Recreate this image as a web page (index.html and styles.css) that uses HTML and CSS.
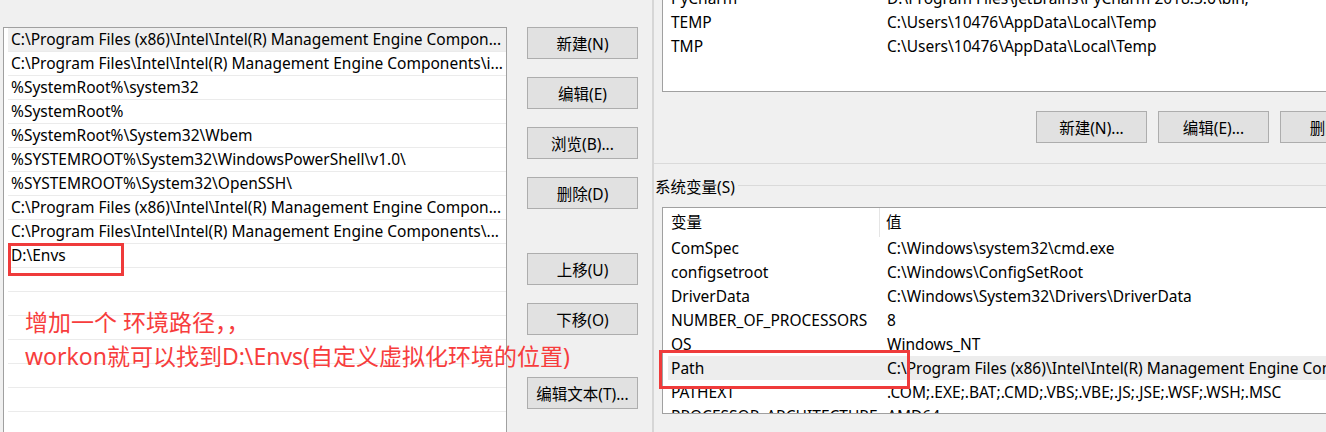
FILE: index.html
```html
<!DOCTYPE html>
<html lang="zh-CN">
<head>
    <meta charset="UTF-8">
    <title>编辑环境变量</title>
    <link rel="stylesheet" href="styles.css">
</head>
<body>
    <div class="screen">
        <!-- 编辑环境变量 对话框 -->
        <div class="edit-pane">
            <ul class="path-list">
                <li class="path-row selected">C:\Program Files (x86)\Intel\Intel(R) Management Engine Compon...</li>
                <li class="path-row">C:\Program Files\Intel\Intel(R) Management Engine Components\i...</li>
                <li class="path-row">%SystemRoot%\system32</li>
                <li class="path-row">%SystemRoot%</li>
                <li class="path-row">%SystemRoot%\System32\Wbem</li>
                <li class="path-row">%SYSTEMROOT%\System32\WindowsPowerShell\v1.0\</li>
                <li class="path-row">%SYSTEMROOT%\System32\OpenSSH\</li>
                <li class="path-row">C:\Program Files (x86)\Intel\Intel(R) Management Engine Compon...</li>
                <li class="path-row">C:\Program Files\Intel\Intel(R) Management Engine Components\...</li>
                <li class="path-row">D:\Envs</li>
                <li class="path-row"></li>
                <li class="path-row"></li>
                <li class="path-row"></li>
                <li class="path-row"></li>
                <li class="path-row"></li>
                <li class="path-row"></li>
                <li class="path-row"></li>
            </ul>
            <div class="btn-col">
                <button class="btn">新建(N)</button>
                <button class="btn">编辑(E)</button>
                <button class="btn">浏览(B)...</button>
                <button class="btn">删除(D)</button>
                <button class="btn move-up">上移(U)</button>
                <button class="btn">下移(O)</button>
                <button class="btn edit-text">编辑文本(T)...</button>
            </div>
        </div>

        <!-- 环境变量 窗口 -->
        <div class="env-pane">
            <div class="var-list user-vars">
                <div class="var-row"><span>PyCharm</span><span>D:\Program Files\JetBrains\PyCharm 2018.3.6\bin;</span></div>
                <div class="var-row"><span>TEMP</span><span>C:\Users\10476\AppData\Local\Temp</span></div>
                <div class="var-row"><span>TMP</span><span>C:\Users\10476\AppData\Local\Temp</span></div>
            </div>
            <div class="btn-row">
                <button class="btn">新建(N)...</button>
                <button class="btn">编辑(E)...</button>
                <button class="btn">删除(D)</button>
            </div>
            <div class="group-sep"></div>
            <div class="group-title">
                <span>系统变量(S)</span>
                <i class="group-line"></i>
            </div>
            <div class="var-list sys-vars">
                <div class="var-head"><span>变量</span><span>值</span></div>
                <div class="var-row"><span>ComSpec</span><span>C:\Windows\system32\cmd.exe</span></div>
                <div class="var-row"><span>configsetroot</span><span>C:\Windows\ConfigSetRoot</span></div>
                <div class="var-row"><span>DriverData</span><span>C:\Windows\System32\Drivers\DriverData</span></div>
                <div class="var-row"><span>NUMBER_OF_PROCESSORS</span><span>8</span></div>
                <div class="var-row"><span>OS</span><span>Windows_NT</span></div>
                <div class="var-row selected"><span>Path</span><span>C:\Program Files (x86)\Intel\Intel(R) Management Engine Components\iCLS\</span></div>
                <div class="var-row"><span>PATHEXT</span><span>.COM;.EXE;.BAT;.CMD;.VBS;.VBE;.JS;.JSE;.WSF;.WSH;.MSC</span></div>
                <div class="var-row"><span>PROCESSOR_ARCHITECTURE</span><span>AMD64</span></div>
            </div>
        </div>

        <!-- 标注 -->
        <div class="mark mark-envs"></div>
        <div class="mark mark-path"></div>
        <p class="note">增加一个 环境路径，，<br>workon就可以找到D:\Envs(自定义虚拟化环境的位置)</p>
    </div>
</body>
</html>
```

FILE: styles.css
```css
body {
    margin: 0;
    font-family: "Noto Sans", "Noto Sans CJK SC", sans-serif;
    font-size: 15.5px;
    color: #000;
    background-color: #f0f0f0;
}
.screen {
    position: relative;
    display: flex;
    width: 1326px;
    height: 432px;
    overflow: hidden;
}

/* left dialog */
.edit-pane {
    display: flex;
    width: 654px;
    flex: none;
    box-sizing: border-box;
    padding: 27px 0 0 3px;
    border-right: 2px solid #d6d6d6;
}
.path-list {
    list-style: none;
    margin: 0;
    padding: 0 0 0 4px;
    width: 504px;
    height: 430px;
    box-sizing: border-box;
    background-color: #fff;
    border: 1px solid #a0a0a0;
    border-bottom: none;
    flex: none;
}
.path-row {
    height: 24px;
    box-sizing: border-box;
    line-height: 23px;
    padding: 0 0 0 3px;
    border-bottom: 1px solid #ebebeb;
    white-space: nowrap;
    overflow: hidden;
}
.path-row.selected {
    background-color: #efefef;
}
.btn-col {
    display: flex;
    flex-direction: column;
    gap: 18px;
    margin-left: 20px;
}
.btn {
    width: 111px;
    height: 32px;
    flex: none;
    padding: 0;
    font-family: inherit;
    font-size: 15.5px;
    color: #000;
    background-color: #e1e1e1;
    border: 1px solid #adadad;
    border-radius: 0;
}
.btn-col .move-up {
    margin-top: 26px;
}
.btn-col .edit-text {
    margin-top: 24px;
}

/* right window */
.env-pane {
    flex: 1;
    min-width: 0;
    overflow: hidden;
}
.var-list {
    width: 720px;
    margin-left: 8px;
    box-sizing: border-box;
    background-color: #fff;
    border: 1px solid #a0a0a0;
    border-right: none;
}
.user-vars {
    margin-top: -15px;
    height: 107px;
    padding-left: 5px;
}
.sys-vars {
    margin-top: 9px;
    height: 207px;
    overflow: hidden;
}
.var-head {
    display: grid;
    grid-template-columns: 217px 1fr;
    height: 28px;
    line-height: 29px;
}
.var-head span:first-child {
    padding-left: 8px;
    border-right: 1px solid #e5e5e5;
}
.var-head span:last-child {
    padding-left: 6px;
}
.var-row {
    display: grid;
    grid-template-columns: 212px 1fr;
    height: 24px;
    line-height: 24px;
    white-space: nowrap;
}
.sys-vars .var-row {
    margin-left: 5px;
}
.var-row span:first-child {
    padding-left: 3px;
}
.var-row span:last-child {
    padding-left: 7px;
    overflow: hidden;
}
.var-row.selected {
    background-color: #ededed;
}
.btn-row {
    display: flex;
    gap: 11px;
    margin-top: 19px;
    padding-left: 382px;
}
.group-sep {
    margin-top: 20px;
    border-top: 1px solid #dadada;
}
.group-title {
    display: flex;
    margin-top: 12px;
    height: 22px;
    line-height: 22px;
    padding-left: 1px;
    white-space: nowrap;
}
.group-line {
    flex: 1;
    align-self: flex-start;
    margin: 9px 0 0 3px;
    border-top: 1px solid #dadada;
}

/* red annotations */
.mark {
    position: absolute;
    border: 3px solid #ef3b3b;
    box-sizing: border-box;
}
.mark-envs {
    left: 8px;
    top: 243px;
    width: 116px;
    height: 33px;
}
.mark-path {
    left: 659px;
    top: 350px;
    width: 251px;
    height: 39px;
}
.note {
    position: absolute;
    left: 25px;
    top: 305px;
    margin: 0;
    font-size: 23px;
    line-height: 34px;
    color: #f73d3d;
    white-space: nowrap;
}
```
